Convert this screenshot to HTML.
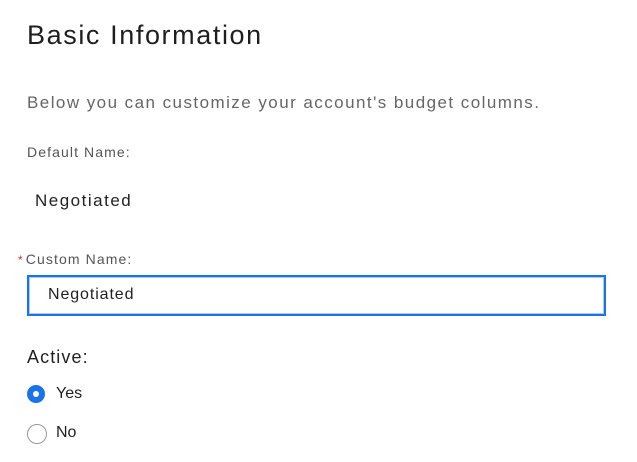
<!DOCTYPE html>
<html><head><meta charset="utf-8"><style>
body{margin:0;width:637px;height:462px;background:#fff;font-family:"Liberation Sans",sans-serif;position:relative;overflow:hidden}
.a{position:absolute;white-space:nowrap}
</style></head><body>
<div class="a" style="left:27px;top:20px;font-size:27px;color:#1f1f1f;letter-spacing:1.6px">Basic Information</div>
<div class="a" style="left:27px;top:93px;font-size:17px;color:#666;letter-spacing:1.45px">Below you can customize your account's budget columns.</div>
<div class="a" style="left:27px;top:144px;font-size:14px;color:#555;letter-spacing:1.1px">Default Name:</div>
<div class="a" style="left:35px;top:191px;font-size:17px;color:#222;letter-spacing:1.5px">Negotiated</div>
<div class="a" style="left:18px;top:251px;font-size:14px;color:#555;letter-spacing:1.1px"><span style="color:#d93025;font-size:12px;margin-right:2px">*</span>Custom Name:</div>
<div class="a" style="left:27px;top:275px;width:575px;height:37px;border:2px solid #1a73e8;box-shadow:inset 0 0 0 1px #a8c8f5"></div>
<div class="a" style="left:48px;top:286px;font-size:16px;color:#222;letter-spacing:0.9px">Negotiated</div>
<div class="a" style="left:27px;top:347px;font-size:18px;color:#222;letter-spacing:1.1px">Active:</div>
<div class="a" style="left:27px;top:385px;width:18px;height:18px;border-radius:50%;background:#1a73e8"><div style="position:absolute;left:6px;top:6px;width:6px;height:6px;border-radius:50%;background:#fff"></div></div>
<div class="a" style="left:56px;top:385px;font-size:16px;color:#222">Yes</div>
<div class="a" style="left:27px;top:424px;width:18px;height:18px;border-radius:50%;border:1px solid #999;background:#fff"></div>
<div class="a" style="left:56px;top:424px;font-size:16px;color:#222">No</div>
</body></html>
